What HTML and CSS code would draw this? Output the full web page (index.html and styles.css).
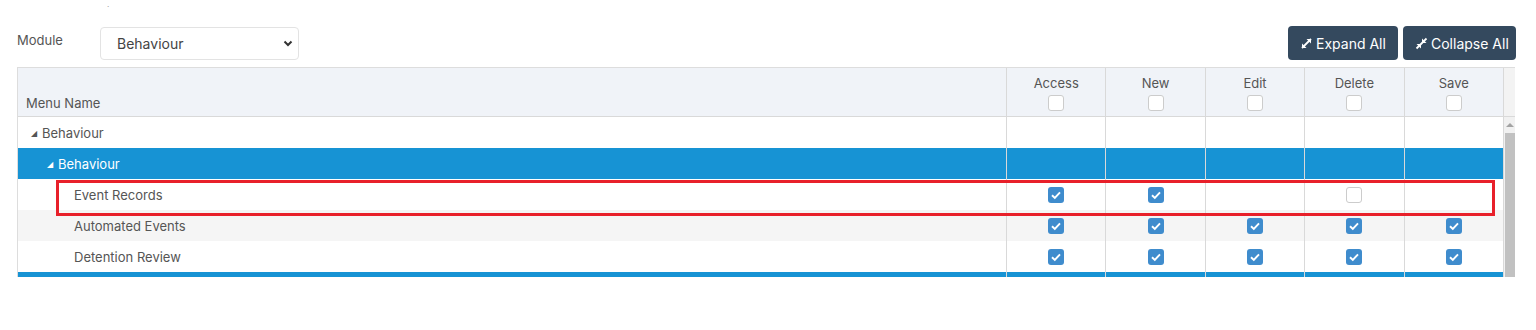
FILE: index.html
```html
<html lang="en">
  <head>
    <meta charset="UTF-8" />
    <title>Menu Rights</title>
    <link rel="stylesheet" href="styles.css">
  </head>
  <body>
    <div class="topdot">.</div>

    <!-- Toolbar -->
    <div class="toolbar">
      <label class="module-label">Module</label>
      <div class="select">
        <span>Behaviour</span>
        <svg class="chevron" width="10" height="7" viewBox="0 0 10 7"><path d="M1.5 1.5 L5 5 L8.5 1.5" fill="none" stroke="#333" stroke-width="2"/></svg>
      </div>
      <div class="spacer"></div>
      <button class="btn">
        <svg width="13" height="13" viewBox="0 0 13 13"><path d="M2 11 L11 2" stroke="#fff" stroke-width="1.8"/><path d="M6.5 2 H11 V6.5 Z" fill="#fff"/><path d="M2 6.5 V11 H6.5 Z" fill="#fff"/></svg>
        Expand All
      </button>
      <button class="btn">
        <svg width="13" height="13" viewBox="0 0 13 13"><path d="M1.5 11.5 L11.5 1.5" stroke="#fff" stroke-width="1.8"/><path d="M7 1.5 V6 H11.5 Z" fill="#fff"/><path d="M1.5 7 H6 V11.5 Z" fill="#fff"/></svg>
        Collapse All
      </button>
    </div>

    <!-- Grid -->
    <div class="grid">
      <div class="grid-head">
        <div class="cell name-col head-name">Menu Name</div>
        <div class="cell perm-col"><span>Access</span><i class="box"></i></div>
        <div class="cell perm-col"><span>New</span><i class="box"></i></div>
        <div class="cell perm-col"><span>Edit</span><i class="box"></i></div>
        <div class="cell perm-col"><span>Delete</span><i class="box"></i></div>
        <div class="cell perm-col"><span>Save</span><i class="box"></i></div>
        <div class="head-scroll"></div>
      </div>

      <div class="grid-body">
        <div class="rows">
          <div class="row">
            <div class="cell name-col lvl0"><span class="tri">&#9698;</span>Behaviour</div>
            <div class="cell perm-col"></div><div class="cell perm-col"></div><div class="cell perm-col"></div><div class="cell perm-col"></div><div class="cell perm-col"></div>
          </div>
          <div class="row selected">
            <div class="cell name-col lvl1"><span class="tri">&#9698;</span>Behaviour</div>
            <div class="cell perm-col"></div><div class="cell perm-col"></div><div class="cell perm-col"></div><div class="cell perm-col"></div><div class="cell perm-col"></div>
          </div>
          <div class="row">
            <div class="cell name-col lvl2">Event Records</div>
            <div class="cell perm-col"><i class="box on"></i></div>
            <div class="cell perm-col"><i class="box on"></i></div>
            <div class="cell perm-col"></div>
            <div class="cell perm-col"><i class="box"></i></div>
            <div class="cell perm-col"></div>
          </div>
          <div class="row alt">
            <div class="cell name-col lvl2">Automated Events</div>
            <div class="cell perm-col"><i class="box on"></i></div>
            <div class="cell perm-col"><i class="box on"></i></div>
            <div class="cell perm-col"><i class="box on"></i></div>
            <div class="cell perm-col"><i class="box on"></i></div>
            <div class="cell perm-col"><i class="box on"></i></div>
          </div>
          <div class="row">
            <div class="cell name-col lvl2">Detention Review</div>
            <div class="cell perm-col"><i class="box on"></i></div>
            <div class="cell perm-col"><i class="box on"></i></div>
            <div class="cell perm-col"><i class="box on"></i></div>
            <div class="cell perm-col"><i class="box on"></i></div>
            <div class="cell perm-col"><i class="box on"></i></div>
          </div>
          <div class="row selected partial">
            <div class="cell name-col"></div>
            <div class="cell perm-col"></div><div class="cell perm-col"></div><div class="cell perm-col"></div><div class="cell perm-col"></div><div class="cell perm-col"></div>
          </div>
        </div>
        <div class="scrollbar">
          <div class="scroll-up"></div>
          <div class="thumb"></div>
        </div>
      </div>

      <!-- highlight annotation -->
      <div class="highlight"></div>
    </div>
  </body>
</html>
```

FILE: styles.css
```css
body {
  margin: 0;
  padding: 0;
  font-family: Inter, "Noto Sans", sans-serif;
  font-size: 13px;
  color: #555;
  background: #fff;
}
.topdot {
  height: 12px;
  padding-left: 107px;
  font-size: 8px;
  line-height: 8px;
  color: #999;
}
.toolbar {
  display: flex;
  align-items: center;
  height: 34px;
  margin-top: 14px;
  padding-left: 17px;
  width: 1499px;
}
.module-label {
  width: 83px;
  margin-top: -6px;
  font-size: 13px;
  color: #555;
}
.select {
  box-sizing: border-box;
  width: 199px;
  height: 33px;
  border: 1px solid #e3e3e3;
  border-radius: 4px;
  display: flex;
  align-items: center;
  justify-content: space-between;
  padding: 0 4px 0 16px;
  font-size: 14px;
  color: #444;
}
.chevron {
  margin-right: 1px;
}
.spacer {
  flex: 1;
}
.btn {
  height: 34px;
  background-color: #34495e;
  color: #fff;
  border: none;
  border-radius: 4px;
  font-family: Inter, "Noto Sans", sans-serif;
  font-size: 14px;
  white-space: nowrap;
  padding: 0 0 0 12px;
  display: flex;
  align-items: center;
  gap: 3px;
  margin-left: 5px;
}
.btn:first-of-type {
  width: 110px;
}
.btn:last-of-type {
  width: 113px;
}
.grid {
  position: relative;
  margin: 7px 0 0 17px;
  width: 1498px;
  border-top: 1px solid #ddd;
  border-left: 1px solid #ddd;
  box-sizing: border-box;
}
.grid-head {
  display: flex;
  height: 48px;
  background: #f0f3f8;
  border-bottom: 1px solid #d9d9d9;
}
.cell {
  box-sizing: border-box;
  border-right: 1px solid #d9d9d9;
}
.name-col {
  width: 989px;
  display: flex;
  align-items: center;
}
.perm-col {
  width: 99.4px;
  display: flex;
  flex-direction: column;
  align-items: center;
  justify-content: center;
}
.head-name {
  align-items: flex-end;
  padding: 0 0 5px 8px;
}
.grid-head .perm-col {
  justify-content: flex-start;
  padding-top: 7px;
  gap: 4px;
}
.head-scroll {
  flex: 1;
  background: #f3f3f3;
}
.box {
  display: block;
  box-sizing: border-box;
  width: 16px;
  height: 16px;
  border: 1px solid #ccc;
  border-radius: 3px;
  background: #fff;
}
.box.on {
  border: none;
  background: #3f8ccd url("data:image/svg+xml,%3Csvg xmlns='http://www.w3.org/2000/svg' width='16' height='16'%3E%3Cpath d='M4 8.3 L6.8 11 L12 5.3' fill='none' stroke='white' stroke-width='1.9'/%3E%3C/svg%3E") no-repeat center;
}
.grid-body {
  display: flex;
}
.rows {
  width: 1486px;
}
.row {
  display: flex;
  height: 31px;
}
.row .cell {
  color: #555;
}
.row.alt {
  background: #f5f5f5;
}
.row.selected {
  background: #1793d4;
}
.row.selected .cell {
  color: #fff;
}
.row.partial {
  height: 5px;
}
.lvl0 {
  padding-left: 13px;
}
.lvl1 {
  padding-left: 29px;
}
.lvl2 {
  padding-left: 56px;
}
.tri {
  font-size: 8px;
  margin-right: 5px;
  margin-top: 1px;
}
.scrollbar {
  flex: 1;
  background: #f1f1f1;
  display: flex;
  flex-direction: column;
  align-items: center;
}
.scroll-up {
  width: 0;
  height: 0;
  margin-top: 6px;
  border-left: 4px solid transparent;
  border-right: 4px solid transparent;
  border-bottom: 4px solid #a3a3a3;
}
.thumb {
  width: 10px;
  flex: 1;
  margin-top: 6px;
  background: #c1c1c1;
}
.highlight {
  position: absolute;
  left: 38px;
  top: 112px;
  width: 1439px;
  height: 36px;
  border: 3px solid #e8202a;
  box-sizing: border-box;
}
```
